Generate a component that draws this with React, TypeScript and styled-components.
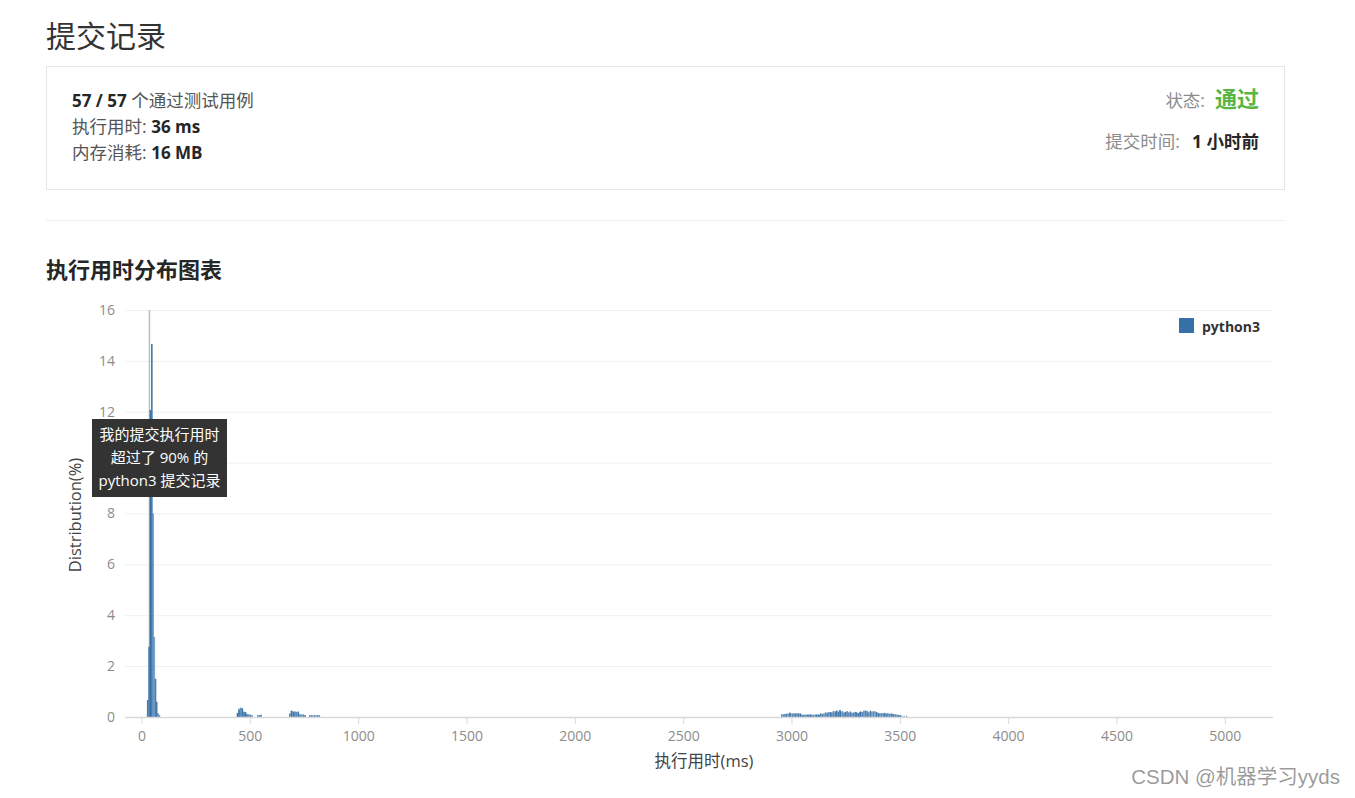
import styled, { createGlobalStyle } from "styled-components";

const GlobalStyle = createGlobalStyle`
  html, body {
    margin: 0;
    padding: 0;
    background: #fff;
  }
  body {
    font-family: "Open Sans", "Noto Sans CJK SC", sans-serif;
    color: #333;
  }
`;

const Page = styled.div`
  position: relative;
  width: 1355px;
  height: 798px;
  overflow: hidden;
  box-sizing: border-box;
  padding: 14px 70px 0 46px;
`;

const Title = styled.h1`
  margin: 0 0 8px;
  font-size: 30px;
  line-height: 44px;
  font-weight: 400;
  color: #333;
`;

const Card = styled.div`
  display: flex;
  justify-content: space-between;
  border: 1px solid #e6e6e6;
  padding: 20px 25px 24px;
`;

const Column = styled.div<{ $align?: "left" | "right" }>`
  display: flex;
  flex-direction: column;
  align-items: ${(p) => (p.$align === "right" ? "flex-end" : "flex-start")};
`;

const Line = styled.div<{ $gap?: number }>`
  height: 26px;
  font-size: 17.5px;
  line-height: 26px;
  color: #555;
  margin-top: ${(p) => p.$gap ?? 0}px;
  white-space: nowrap;
`;

const Strong = styled.b`
  font-size: 17px;
  line-height: 1;
  font-weight: 700;
  color: #262626;
`;

const Muted = styled.span`
  color: #8c8c8c;
`;

const Status = styled.span`
  margin-left: 10px;
  font-size: 22px;
  line-height: 1;
  font-weight: 700;
  color: #5ab543;
`;

const Value = styled.b`
  margin-left: 12px;
  font-weight: 700;
  color: #262626;
`;

const Divider = styled.hr`
  margin: 30px 0 0;
  border: none;
  height: 1px;
  background: #eeeeee;
`;

const Heading = styled.h2`
  margin: 33px 0 0;
  font-size: 22px;
  line-height: 30px;
  font-weight: 700;
  color: #262626;
`;

const ChartWrap = styled.div`
  position: relative;
  width: 1239px;
  height: 490px;
  margin-top: 6px;
`;

const Tooltip = styled.div`
  position: absolute;
  left: 46px;
  top: 129px;
  width: 135px;
  height: 78px;
  box-sizing: border-box;
  padding-top: 4px;
  background: #333;
  color: #fff;
  font-size: 15px;
  line-height: 23px;
  text-align: center;
  white-space: nowrap;
`;

const Watermark = styled.div`
  position: absolute;
  right: 15px;
  top: 764px;
  font-family: "Liberation Sans", "Noto Sans CJK SC", sans-serif;
  font-size: 20.5px;
  line-height: 26px;
  color: rgba(110, 110, 110, 0.7);
  text-shadow: 0 0 1px rgba(255, 255, 255, 0.9);
`;

// chart geometry, in page coordinates (the svg viewBox matches the page)
const X0 = 142;
const PX_PER_MS = 0.21666;
const BASE_Y = 717;
const PX_PER_UNIT = 25.44;
const BAR_COLOR = "#3670a6";

const yOf = (v: number) => BASE_Y - v * PX_PER_UNIT;
const rand = (i: number) => {
  const s = Math.sin(i * 12.9898) * 43758.5453;
  return s - Math.floor(s);
};

type Bar = { x: number; w: number; v: number; o: number };

const peak: [number, number, number][] = [
  [146.9, 0.67, 0.9],
  [148.3, 2.76, 0.95],
  [149.6, 12.07, 1],
  [151.1, 14.66, 1],
  [152.4, 8.0, 0.7],
  [153.6, 3.15, 0.65],
  [154.8, 1.5, 0.9],
  [156.0, 0.6, 0.9],
  [157.3, 0.15, 0.8],
  [158.7, 0.08, 0.7],
];

// segments of the long tail: [fromPx, toPx, heightFrom, heightTo]
const tail: [number, number, number, number][] = [
  [236.7, 238.3, 0.19, 0.3],
  [238.3, 241.7, 0.34, 0.37],
  [241.7, 245, 0.27, 0.18],
  [245, 252, 0.12, 0.07],
  [257, 261, 0.08, 0.08],
  [289, 291, 0.15, 0.28],
  [291, 298, 0.22, 0.2],
  [298, 305, 0.14, 0.07],
  [309, 320, 0.08, 0.07],
  [781, 790, 0.11, 0.17],
  [790, 800, 0.16, 0.13],
  [800, 820, 0.1, 0.1],
  [820, 840, 0.13, 0.26],
  [840, 860, 0.21, 0.18],
  [860, 876, 0.22, 0.22],
  [876, 893, 0.17, 0.12],
  [893, 900, 0.1, 0.08],
];

const buildBars = (): Bar[] => {
  const bars: Bar[] = peak.map(([x, v, o]) => ({ x, w: 1.5, v, o }));
  let n = 0;
  tail.forEach(([a, b, h0, h1]) => {
    for (let x = a; x < b; x += 1.6) {
      const t = (x - a) / Math.max(b - a, 1);
      const v = (h0 + (h1 - h0) * t) * (0.85 + rand(n++) * 0.3);
      bars.push({ x, w: 1.5, v, o: 0.75 + rand(n++) * 0.25 });
    }
  });
  [901, 903.5, 906].forEach((x) => bars.push({ x, w: 1.2, v: 0.05, o: 0.7 }));
  return bars;
};

const bars = buildBars();
const yTicks = [0, 2, 4, 6, 8, 10, 12, 14, 16];
const xTicks = [0, 500, 1000, 1500, 2000, 2500, 3000, 3500, 4000, 4500, 5000];

const Chart = () => (
  <svg width={1239} height={490} viewBox="46 290 1239 490">
    {yTicks.map((v) => (
      <g key={v}>
        <line x1={125} x2={1273} y1={yOf(v) + 0.5} y2={yOf(v) + 0.5} stroke="#f0f0f0" />
        <text
          x={115}
          y={yOf(v) + 5}
          textAnchor="end"
          fontSize={14}
          fill="#8c8c8c"
          fontFamily="Open Sans, sans-serif"
        >
          {v}
        </text>
      </g>
    ))}
    <rect x={148.7} y={310} width={1.5} height={BASE_Y - 310} fill="#bdbdbd" />
    {bars.map((b, i) => (
      <rect
        key={i}
        x={b.x}
        y={yOf(b.v)}
        width={b.w}
        height={b.v * PX_PER_UNIT}
        fill={BAR_COLOR}
        fillOpacity={b.o}
      />
    ))}
    <line x1={125} x2={1273} y1={BASE_Y + 0.5} y2={BASE_Y + 0.5} stroke="#d9d9d9" strokeWidth={1.5} />
    {xTicks.map((v) => {
      const x = X0 + v * PX_PER_MS;
      return (
        <g key={v}>
          <line x1={x} x2={x} y1={BASE_Y + 1} y2={BASE_Y + 7} stroke="#d9d9d9" />
          <text
            x={x}
            y={741}
            textAnchor="middle"
            fontSize={14}
            fill="#8c8c8c"
            fontFamily="Open Sans, sans-serif"
          >
            {v}
          </text>
        </g>
      );
    })}
    <text
      x={704}
      y={767}
      textAnchor="middle"
      fontSize={16.5}
      fill="#444"
      fontFamily="Open Sans, Noto Sans CJK SC, sans-serif"
    >
      执行用时(ms)
    </text>
    <text
      transform="translate(81 515) rotate(-90)"
      textAnchor="middle"
      fontSize={16.5}
      fill="#444"
      fontFamily="Open Sans, sans-serif"
    >
      Distribution(%)
    </text>
    <rect x={1179} y={318} width={15} height={15} fill={BAR_COLOR} />
    <text x={1202} y={332} fontSize={14} fontWeight={700} fill="#333" fontFamily="Open Sans, sans-serif">
      python3
    </text>
  </svg>
);

const App = () => (
  <Page>
    <GlobalStyle />
    <Title>提交记录</Title>
    <Card>
      <Column>
        <Line>
          <Strong>57 / 57</Strong> 个通过测试用例
        </Line>
        <Line>
          执行用时: <Strong>36 ms</Strong>
        </Line>
        <Line>
          内存消耗: <Strong>16 MB</Strong>
        </Line>
      </Column>
      <Column $align="right">
        <Line>
          <Muted>状态:</Muted>
          <Status>通过</Status>
        </Line>
        <Line $gap={15}>
          <Muted>提交时间:</Muted>
          <Value>1 小时前</Value>
        </Line>
      </Column>
    </Card>
    <Divider />
    <Heading>执行用时分布图表</Heading>
    <ChartWrap>
      <Chart />
      <Tooltip>
        我的提交执行用时
        <br />
        超过了 90% 的
        <br />
        python3 提交记录
      </Tooltip>
    </ChartWrap>
    <Watermark>CSDN @机器学习yyds</Watermark>
  </Page>
);

export default App;
